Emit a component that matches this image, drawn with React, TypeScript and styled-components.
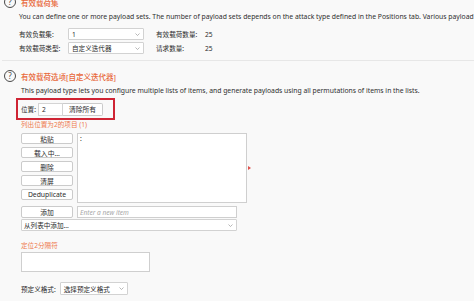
import React from 'react'
import styled, { createGlobalStyle } from 'styled-components'

const GlobalStyle = createGlobalStyle`
  html, body {
    margin: 0;
    padding: 0;
    background: #f9f9f9;
    overflow: hidden;
  }
  body {
    font-family: "Noto Sans", "Noto Sans CJK SC", sans-serif;
    color: #2b2b2b;
  }
`

const Page = styled.div`
  width: 474px;
  height: 301px;
  overflow: hidden;
  background: #f9f9f9;
`

const Section = styled.section<{ $top?: number }>`
  margin-top: ${(p) => p.$top ?? 0}px;
  padding: 0 0 6px 4px;
`

const TopSection = styled(Section)`
  border-bottom: 1px solid #e7e7e7;
  margin-left: 2px;
  padding-left: 2px;
`

const HeaderRow = styled.div`
  display: flex;
  align-items: center;
  gap: 5px;
  height: 12px;
`

const HelpIcon = styled.span`
  width: 10px;
  height: 10px;
  border: 1px solid #4a4a4a;
  border-radius: 50%;
  display: flex;
  align-items: center;
  justify-content: center;
  font-size: 8px;
  line-height: 1;
  color: #4a4a4a;
  flex-shrink: 0;
`

const Heading = styled.h2`
  margin: 0;
  font-size: 7.5px;
  font-weight: 500;
  color: #e8683a;
  white-space: nowrap;
`

const Body = styled.div<{ $indent?: number }>`
  padding-left: ${(p) => p.$indent ?? 15}px;
`

const Desc = styled.p`
  margin: 3px 0 0;
  font-size: 6.8px;
  line-height: 11px;
  white-space: nowrap;
  color: #2e2e2e;
`

const SetGrid = styled.div`
  margin-top: 6px;
  display: grid;
  grid-template-columns: 49px 76px 61px auto;
  grid-auto-rows: 12px;
  row-gap: 2px;
  align-items: center;
`

const Label = styled.span`
  white-space: nowrap;
  font-size: 6.6px;
`

const StatLabel = styled(Label)`
  padding-left: 12px;
`

const Select = styled.div<{ $w?: number }>`
  box-sizing: border-box;
  width: ${(p) => (p.$w ? `${p.$w}px` : '100%')};
  height: 100%;
  background: #fff;
  border: 1px solid #d2d2d2;
  border-radius: 1px;
  display: flex;
  align-items: center;
  justify-content: space-between;
  padding: 0 3px 0 3px;
  font-size: 6.6px;
  white-space: nowrap;
`

const Chevron = () => (
  <svg width="5" height="3" viewBox="0 0 5 3">
    <polyline points="0.5,0.5 2.5,2.5 4.5,0.5" fill="none" stroke="#9a9a9a" strokeWidth="0.7" />
  </svg>
)

const PositionBox = styled.div`
  margin: 2px 0 0 -5px;
  box-sizing: border-box;
  width: 99px;
  height: 22px;
  border: 2px solid #cf2434;
  display: flex;
  align-items: center;
  padding-left: 3px;
`

const PosInput = styled.div`
  box-sizing: border-box;
  width: 25px;
  height: 13px;
  background: #fff;
  border: 1px solid #d4d4d4;
  margin-left: 2px;
  padding-left: 3px;
  display: flex;
  align-items: center;
  font-size: 6.6px;
`

const Button = styled.div<{ $w?: number; $h?: number }>`
  box-sizing: border-box;
  width: ${(p) => p.$w ?? 52}px;
  height: ${(p) => p.$h ?? 11}px;
  background: #fff;
  border: 1px solid #cbcbcb;
  border-radius: 2px;
  display: flex;
  align-items: center;
  justify-content: center;
  font-size: 6.8px;
  white-space: nowrap;
  color: #2b2b2b;
`

const ClearButton = styled(Button)`
  border-radius: 0 2px 2px 0;
  border-left: none;
`

const OrangeLabel = styled.div<{ $top?: number }>`
  margin-top: ${(p) => p.$top ?? 0}px;
  height: 10px;
  line-height: 10px;
  font-size: 6.6px;
  color: #ee7a4c;
  white-space: nowrap;
`

const ListArea = styled.div`
  margin-top: 3px;
  display: flex;
  align-items: flex-start;
  gap: 4px;
`

const ButtonColumn = styled.div`
  display: flex;
  flex-direction: column;
  gap: 3px;
`

const ListBox = styled.div`
  box-sizing: border-box;
  width: 170px;
  height: 70px;
  background: #fff;
  border: 1px solid #cfcfcf;
  padding: 0 2px;
  font-size: 6.6px;
  line-height: 9px;
`

const ResizeArrow = styled.span`
  align-self: center;
  margin-left: -3px;
  width: 0;
  height: 0;
  border-top: 2px solid transparent;
  border-bottom: 2px solid transparent;
  border-left: 3px solid #e0504c;
`

const AddRow = styled.div`
  margin-top: 3px;
  display: flex;
  align-items: center;
  gap: 4px;
  height: 12px;
`

const TextInput = styled.div`
  box-sizing: border-box;
  width: 160px;
  height: 12px;
  background: #fff;
  border: 1px solid #cfcfcf;
  padding-left: 2px;
  display: flex;
  align-items: center;
  font-size: 6.6px;
  font-style: italic;
  color: #a8a8a8;
`

const WideSelect = styled(Select)`
  margin-top: 1px;
  width: 216px;
  height: 12px;
  padding-left: 2px;
`

const TextBox = styled.div`
  margin-top: 1px;
  box-sizing: border-box;
  width: 129px;
  height: 20px;
  background: #fff;
  border: 1px solid #cfcfcf;
`

const FormatRow = styled.div`
  margin-top: 10px;
  display: flex;
  align-items: center;
  gap: 4px;
  height: 13px;
`

const listButtons = ['粘贴', '载入中...', '删除', '清屏', 'Deduplicate']

export default function App() {
  return (
    <Page>
      <GlobalStyle />
      <TopSection $top={-4}>
        <HeaderRow>
          <HelpIcon>?</HelpIcon>
          <Heading>有效载荷集</Heading>
        </HeaderRow>
        <Body>
          <Desc>
            You can define one or more payload sets. The number of payload sets depends on the attack type
            defined in the Positions tab. Various payload types are available for each payload set.
          </Desc>
          <SetGrid>
            <Label>有效负载集:</Label>
            <Select>
              <span>1</span>
              <Chevron />
            </Select>
            <StatLabel>有效载荷数量:</StatLabel>
            <Label>25</Label>
            <Label>有效载荷类型:</Label>
            <Select>
              <span>自定义迭代器</span>
              <Chevron />
            </Select>
            <StatLabel>请求数量:</StatLabel>
            <Label>25</Label>
          </SetGrid>
        </Body>
      </TopSection>

      <Section $top={9}>
        <HeaderRow>
          <HelpIcon>?</HelpIcon>
          <Heading>有效载荷选项[自定义迭代器]</Heading>
        </HeaderRow>
        <Body $indent={17}>
          <Desc>
            This payload type lets you configure multiple lists of items, and generate payloads using all
            permutations of items in the lists.
          </Desc>
          <PositionBox>
            <Label>位置:</Label>
            <PosInput>2</PosInput>
            <ClearButton $w={40} $h={13}>
              清除所有
            </ClearButton>
          </PositionBox>
          <OrangeLabel>列出位置为2的项目 (1)</OrangeLabel>
          <ListArea>
            <ButtonColumn>
              {listButtons.map((b) => (
                <Button key={b}>{b}</Button>
              ))}
            </ButtonColumn>
            <ListBox>:</ListBox>
            <ResizeArrow />
          </ListArea>
          <AddRow>
            <Button $h={12}>添加</Button>
            <TextInput>Enter a new item</TextInput>
          </AddRow>
          <WideSelect>
            <span>从列表中添加...</span>
            <Chevron />
          </WideSelect>
          <OrangeLabel $top={10}>定位2分隔符</OrangeLabel>
          <TextBox />
          <FormatRow>
            <Label>预定义格式:</Label>
            <Select $w={68}>
              <span>选择预定义格式</span>
              <Chevron />
            </Select>
          </FormatRow>
        </Body>
      </Section>
    </Page>
  )
}
